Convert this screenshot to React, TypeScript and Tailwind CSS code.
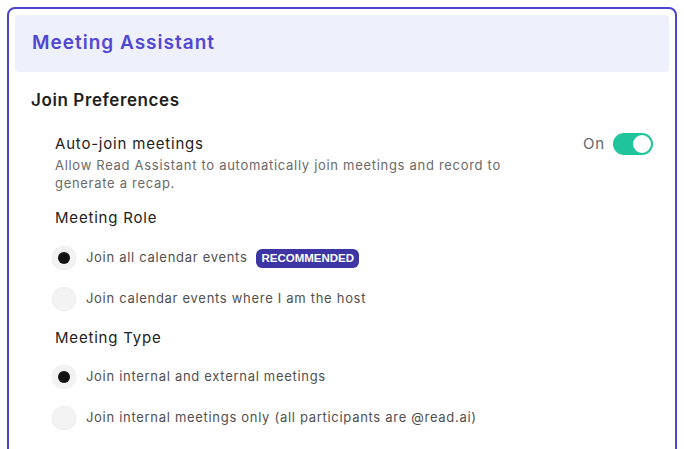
import type { ReactNode } from "react";

function Radio({ checked, children }: { checked?: boolean; children: ReactNode }) {
  return (
    <div className="flex items-center h-[24px]">
      <span className="flex h-[24px] w-[24px] items-center justify-center rounded-full bg-[#f3f3f3] shadow-[inset_0_0_1px_rgba(0,0,0,0.14)]">
        {checked && <span className="h-[12px] w-[12px] rounded-full bg-[#121212]" />}
      </span>
      <span className="ml-[10px] text-[13px] tracking-[0.7px] text-[#505050]">{children}</span>
    </div>
  );
}

export default function App() {
  return (
    <div className="min-h-screen bg-white pt-[7px] px-[7px] font-['Inter',sans-serif]">
      <div className="h-[460px] rounded-[8px] border-2 border-[#4b44cc] p-[6px]">
        <div className="flex h-[57px] items-center rounded-[4px] bg-[#eef0fb] px-[17px]">
          <h1 className="text-[19px] font-semibold tracking-[1px] text-[#5147d3]">Meeting Assistant</h1>
        </div>
        <div className="px-[16px] pt-[17px]">
          <h2 className="text-[17px] font-semibold leading-[22px] tracking-[0.6px] text-[#1e1e1e]">Join Preferences</h2>
          <div className="pl-[24px] pt-[23px]">
            <div className="flex items-start justify-between">
              <div>
                <div className="text-[15px] leading-[20px] tracking-[0.8px] text-[#222]">Auto-join meetings</div>
                <p className="mt-[2px] w-[480px] text-[13px] leading-[18px] tracking-[0.7px] text-[#6a6a6a]">
                  Allow Read Assistant to automatically join meetings and record to generate a recap.
                </p>
              </div>
              <div className="flex items-center gap-[8px] -mt-[1px]">
                <span className="text-[15px] tracking-[0.8px] text-[#666]">On</span>
                <span className="flex h-[22px] w-[40px] items-center justify-end rounded-full bg-[#1fc49a] px-[2px]">
                  <span className="h-[18px] w-[18px] rounded-full bg-white" />
                </span>
              </div>
            </div>
            <div className="mt-[16px] text-[15px] leading-[20px] tracking-[0.8px] text-[#222]">Meeting Role</div>
            <div className="mt-[18px] -ml-[3px] flex flex-col gap-[17px]">
              <Radio checked>
                <span className="inline-flex items-center gap-[9px]">
                  Join all calendar events
                  <span className="rounded-[6px] bg-[#3d35a3] px-[5px] py-[2px] font-['Liberation_Sans',sans-serif] text-[11.5px] font-bold leading-[15px] tracking-normal text-white">
                    RECOMMENDED
                  </span>
                </span>
              </Radio>
              <Radio>Join calendar events where I am the host</Radio>
            </div>
            <div className="mt-[17px] text-[15px] leading-[20px] tracking-[0.8px] text-[#222]">Meeting Type</div>
            <div className="mt-[17px] -ml-[3px] flex flex-col gap-[17px]">
              <Radio checked>Join internal and external meetings</Radio>
              <Radio>Join internal meetings only (all participants are @read.ai)</Radio>
            </div>
          </div>
        </div>
      </div>
    </div>
  );
}
